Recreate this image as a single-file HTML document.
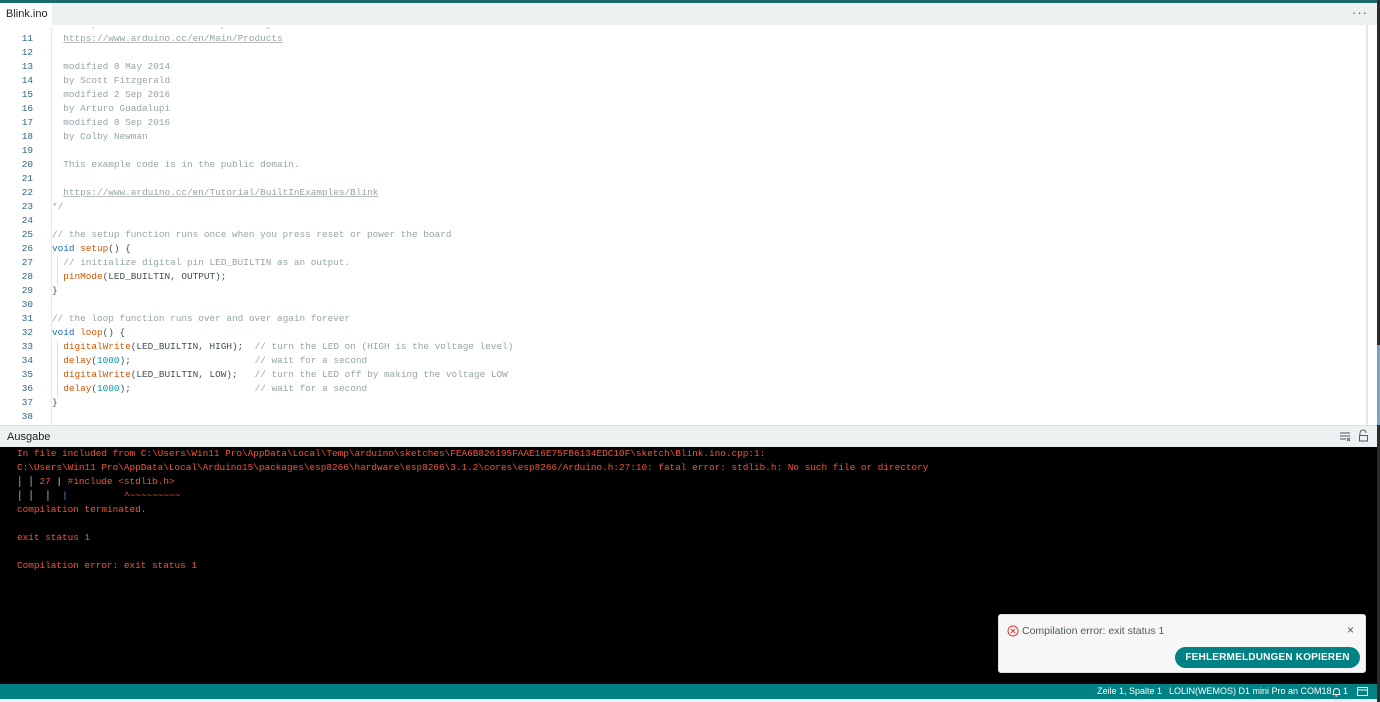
<!DOCTYPE html>
<html><head><meta charset="utf-8"><style>
*{margin:0;padding:0;box-sizing:border-box}
body{width:1380px;height:702px;overflow:hidden;background:#fff;font-family:"Liberation Sans",sans-serif;position:relative}
.mono{font-family:"Liberation Mono",monospace;font-size:9.4px;white-space:pre}
#top{position:absolute;left:0;top:0;width:1380px;height:3px;background:#1b6a6c}
#tabs{position:absolute;left:0;top:3px;width:1378px;height:22px;background:#ecf1f1}
#tab{position:absolute;left:0;top:0;width:52px;height:22px;background:#fff;font-size:11px;color:#222;padding:5px 0 0 6px}
#dots{position:absolute;right:10px;top:2px;font-size:13px;color:#4e5b61;letter-spacing:1px}
#ed{position:absolute;left:0;top:27px;width:1366px;height:398px;overflow:hidden}
.ln{position:absolute;left:0;width:33px;text-align:right;color:#2d6383}
.cd{position:absolute;left:52px;color:#434f54}
.c{color:#95a5a6}.k{color:#1a6bb5}.f{color:#d35400}.n{color:#00979c}
.u{text-decoration:underline;text-decoration-color:#bbb}
#gl{position:absolute;left:51px;top:0;width:1px;height:400px;background:#e8e8e8}
#scr{position:absolute;left:1366px;top:25px;width:2px;height:400px;background:#e6e6e6}
#rb{position:absolute;left:1377px;top:0;width:3px;height:702px;background:#2b2b2b}
#rb2{position:absolute;left:1377px;top:345px;width:3px;height:80px;background:#7aa0c0}
#oh{position:absolute;left:0;top:425px;width:1377px;height:22px;background:#ecf1f1;border-top:1px solid #ddd}
#oh span{position:absolute;left:7px;top:5px;font-size:11px;color:#222}
#out{position:absolute;left:0;top:447px;width:1377px;height:237px;background:#000}
.o{position:absolute;left:17px;color:#f0553a}
#toast{position:absolute;left:998px;top:614px;width:368px;height:59px;background:#f7f7f7;border-radius:3px;border:1px solid #ddd}
#tt{position:absolute;left:23px;top:10px;font-size:10.5px;color:#4e5b61}
#btn{position:absolute;left:176px;top:32px;width:185px;height:21px;border-radius:11px;background:#008184;color:#fff;font-size:10px;font-weight:bold;text-align:center;line-height:21px;letter-spacing:.2px}
#sb{position:absolute;left:0;top:684px;width:1377px;height:15px;background:#008184;color:#fff;font-size:9px}
#sb2{position:absolute;left:0;top:699px;width:1377px;height:3px;background:#e8eef2}
</style></head><body>
<div id="top"></div>
<div id="tabs"><div id="tab">Blink.ino</div><div id="dots">···</div></div>
<div id="ed" class="mono">
<div id="gl"></div>
<div class="ln" style="top:-8px">10</div><div class="cd c" style="top:-8px">  model, check the Technical Specs of your board at:</div>
<div class="ln" style="top:6px">11</div><div class="cd c" style="top:6px">  <span class="u">https://www.arduino.cc/en/Main/Products</span></div>
<div class="ln" style="top:20px">12</div>
<div class="ln" style="top:34px">13</div><div class="cd c" style="top:34px">  modified 8 May 2014</div>
<div class="ln" style="top:48px">14</div><div class="cd c" style="top:48px">  by Scott Fitzgerald</div>
<div class="ln" style="top:62px">15</div><div class="cd c" style="top:62px">  modified 2 Sep 2016</div>
<div class="ln" style="top:76px">16</div><div class="cd c" style="top:76px">  by Arturo Guadalupi</div>
<div class="ln" style="top:90px">17</div><div class="cd c" style="top:90px">  modified 8 Sep 2016</div>
<div class="ln" style="top:104px">18</div><div class="cd c" style="top:104px">  by Colby Newman</div>
<div class="ln" style="top:118px">19</div>
<div class="ln" style="top:132px">20</div><div class="cd c" style="top:132px">  This example code is in the public domain.</div>
<div class="ln" style="top:146px">21</div>
<div class="ln" style="top:160px">22</div><div class="cd c" style="top:160px">  <span class="u">https://www.arduino.cc/en/Tutorial/BuiltInExamples/Blink</span></div>
<div class="ln" style="top:174px">23</div><div class="cd c" style="top:174px">*/</div>
<div class="ln" style="top:188px">24</div>
<div class="ln" style="top:202px">25</div><div class="cd c" style="top:202px">// the setup function runs once when you press reset or power the board</div>
<div class="ln" style="top:216px">26</div><div class="cd" style="top:216px"><span class="k">void</span> <span class="f">setup</span>() {</div>
<div class="ln" style="top:230px">27</div><div class="cd c" style="top:230px">  // initialize digital pin LED_BUILTIN as an output.</div>
<div class="ln" style="top:244px">28</div><div class="cd" style="top:244px">  <span class="f">pinMode</span>(LED_BUILTIN, OUTPUT);</div>
<div class="ln" style="top:258px">29</div><div class="cd" style="top:258px">}</div>
<div class="ln" style="top:272px">30</div>
<div class="ln" style="top:286px">31</div><div class="cd c" style="top:286px">// the loop function runs over and over again forever</div>
<div class="ln" style="top:300px">32</div><div class="cd" style="top:300px"><span class="k">void</span> <span class="f">loop</span>() {</div>
<div class="ln" style="top:314px">33</div><div class="cd" style="top:314px">  <span class="f">digitalWrite</span>(LED_BUILTIN, HIGH);  <span class="c">// turn the LED on (HIGH is the voltage level)</span></div>
<div class="ln" style="top:328px">34</div><div class="cd" style="top:328px">  <span class="f">delay</span>(<span class="n">1000</span>);                      <span class="c">// wait for a second</span></div>
<div class="ln" style="top:342px">35</div><div class="cd" style="top:342px">  <span class="f">digitalWrite</span>(LED_BUILTIN, LOW);   <span class="c">// turn the LED off by making the voltage LOW</span></div>
<div class="ln" style="top:356px">36</div><div class="cd" style="top:356px">  <span class="f">delay</span>(<span class="n">1000</span>);                      <span class="c">// wait for a second</span></div>
<div class="ln" style="top:370px">37</div><div class="cd" style="top:370px">}</div>
<div class="ln" style="top:384px">38</div>
<div style="position:absolute;left:57px;top:230px;width:1px;height:28px;background:#ddd"></div>
<div style="position:absolute;left:57px;top:314px;width:1px;height:56px;background:#ddd"></div>
</div>
<div id="scr"></div>
<div id="oh"><span>Ausgabe</span>
<svg style="position:absolute;left:1339px;top:5px" width="12" height="11" viewBox="0 0 12 11"><path d="M1 2h10M1 5h10M1 8h6M8 7l3 3M11 7l-3 3" stroke="#4e5b61" stroke-width="1" fill="none"/></svg>
<svg style="position:absolute;left:1358px;top:3px" width="11" height="13" viewBox="0 0 11 13"><path d="M2 6V4a3 3 0 0 1 6 0M1.5 6.5h8v5.5h-8z" stroke="#4e5b61" stroke-width="1" fill="none"/></svg>
</div>
<div id="out" class="mono">
<div class="o" style="top:1px">In file included from C:\Users\Win11 Pro\AppData\Local\Temp\arduino\sketches\FEA6B826195FAAE16E75FB6134EDC10F\sketch\Blink.ino.cpp:1:</div>
<div class="o" style="top:15px">C:\Users\Win11 Pro\AppData\Local\Arduino15\packages\esp8266\hardware\esp8266\3.1.2\cores\esp8266/Arduino.h:27:10: fatal error: stdlib.h: No such file or directory</div>
<div class="o" style="top:29px"><span style="color:#ddd">│ │</span> 27 <span style="color:#ddd">|</span> #include &lt;stdlib.h&gt;</div>
<div class="o" style="top:43px"><span style="color:#ddd">│ │</span>  <span style="color:#ddd">│</span>  <span style="color:#4a90d9">|</span>          ^~~~~~~~~~</div>
<div class="o" style="top:57px">compilation terminated.</div>
<div class="o" style="top:85px">exit status 1</div>
<div class="o" style="top:113px">Compilation error: exit status 1</div>
</div>
<div id="toast">
<svg style="position:absolute;left:8px;top:10px" width="12" height="12" viewBox="0 0 12 12"><circle cx="6" cy="6" r="5" stroke="#da3b2a" fill="none"/><path d="M4 4l4 4M8 4l-4 4" stroke="#da3b2a"/></svg>
<div id="tt">Compilation error: exit status 1</div>
<div style="position:absolute;left:348px;top:8px;font-size:12px;color:#555">×</div>
<div id="btn">FEHLERMELDUNGEN KOPIEREN</div>
</div>
<div id="sb">
<span style="position:absolute;left:1097px;top:2px">Zeile 1, Spalte 1</span>
<span style="position:absolute;left:1169px;top:2px">LOLIN(WEMOS) D1 mini Pro an COM18</span>
<svg style="position:absolute;left:1332px;top:3px" width="9" height="10" viewBox="0 0 9 10"><path d="M1.5 7.5V4.5a3 3 0 0 1 6 0v3zM0.5 7.5h8M3.5 9h2" stroke="#fff" fill="none"/></svg>
<span style="position:absolute;left:1343px;top:2px">1</span>
<svg style="position:absolute;left:1357px;top:3px" width="11" height="9" viewBox="0 0 11 9"><rect x=".5" y=".5" width="10" height="8" stroke="#fff" fill="none"/><path d="M1 3h9" stroke="#fff"/></svg>
</div>
<div id="sb2"></div>
<div id="rb"></div><div id="rb2"></div>
</body></html>
